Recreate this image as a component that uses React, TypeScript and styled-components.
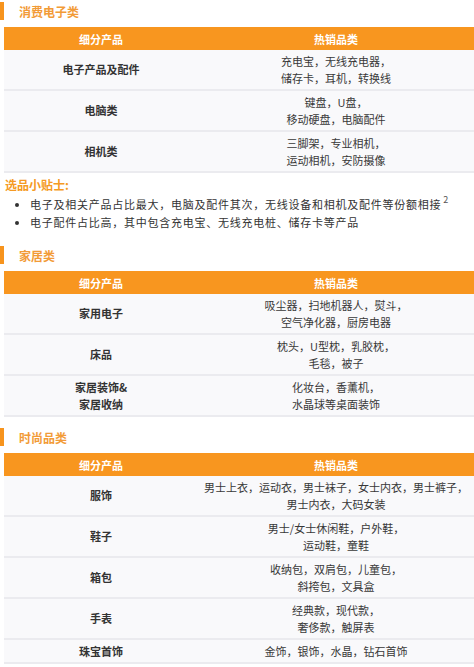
import styled, { createGlobalStyle } from "styled-components";

const GlobalStyle = createGlobalStyle`
  html, body {
    margin: 0;
    padding: 0;
    background: #fff;
  }
  body {
    font-family: "Noto Sans CJK SC", "Noto Sans", sans-serif;
    color: #333;
    overflow: hidden;
  }
`;

type Row = { name: string[]; items: string[] };
type Section = { title: string; rows: Row[] };

const sections: Section[] = [
  {
    title: "消费电子类",
    rows: [
      { name: ["电子产品及配件"], items: ["充电宝，无线充电器，", "储存卡，耳机，转换线"] },
      { name: ["电脑类"], items: ["键盘，U盘，", "移动硬盘，电脑配件"] },
      { name: ["相机类"], items: ["三脚架，专业相机，", "运动相机，安防摄像"] },
    ],
  },
  {
    title: "家居类",
    rows: [
      { name: ["家用电子"], items: ["吸尘器，扫地机器人，熨斗，", "空气净化器，厨房电器"] },
      { name: ["床品"], items: ["枕头，U型枕，乳胶枕，", "毛毯，被子"] },
      { name: ["家居装饰&", "家居收纳"], items: ["化妆台，香薰机，", "水晶球等桌面装饰"] },
    ],
  },
  {
    title: "时尚品类",
    rows: [
      {
        name: ["服饰"],
        items: ["男士上衣，运动衣，男士袜子，女士内衣，男士裤子，", "男士内衣，大码女装"],
      },
      { name: ["鞋子"], items: ["男士/女士休闲鞋，户外鞋，", "运动鞋，童鞋"] },
      { name: ["箱包"], items: ["收纳包，双肩包，儿童包，", "斜挎包，文具盒"] },
      { name: ["手表"], items: ["经典款，现代款，", "奢侈款，触屏表"] },
      { name: ["珠宝首饰"], items: ["金饰，银饰，水晶，钻石首饰"] },
    ],
  },
];

const tips = [
  { text: "电子及相关产品占比最大，电脑及配件其次，无线设备和相机及配件等份额相接", note: "2" },
  { text: "电子配件占比高，其中包含充电宝、无线充电桩、储存卡等产品" },
];

function Lines({ lines }: { lines: string[] }) {
  return (
    <>
      {lines.map((l, i) => (
        <span key={i}>
          {l}
          {i < lines.length - 1 && <br />}
        </span>
      ))}
    </>
  );
}

function CategoryTable({ section, first }: { section: Section; first?: boolean }) {
  return (
    <Block $first={first}>
      <SectionTitle>{section.title}</SectionTitle>
      <Table>
        <colgroup>
          <col style={{ width: 194 }} />
          <col />
        </colgroup>
        <thead>
          <tr>
            <HeadCell>细分产品</HeadCell>
            <HeadCell>热销品类</HeadCell>
          </tr>
        </thead>
        <tbody>
          {section.rows.map((row, i) => (
            <BodyRow key={i}>
              <NameCell>
                <Lines lines={row.name} />
              </NameCell>
              <ItemCell>
                <Lines lines={row.items} />
              </ItemCell>
            </BodyRow>
          ))}
        </tbody>
      </Table>
    </Block>
  );
}

export default function App() {
  return (
    <Page>
      <GlobalStyle />
      <CategoryTable section={sections[0]} first />
      <Tips>
        <TipsTitle>选品小贴士:</TipsTitle>
        <TipList>
          {tips.map((t, i) => (
            <li key={i}>
              {t.text}
              {t.note && <Note>{t.note}</Note>}
            </li>
          ))}
        </TipList>
      </Tips>
      <CategoryTable section={sections[1]} />
      <CategoryTable section={sections[2]} />
    </Page>
  );
}

const Page = styled.div`
  width: 474px;
  display: flex;
  flex-direction: column;
`;

const Block = styled.section<{ $first?: boolean }>`
  display: flex;
  flex-direction: column;
  margin-top: ${(p) => (p.$first ? "2px" : "11px")};
`;

const SectionTitle = styled.h3`
  margin: 0 0 7px;
  height: 18px;
  display: flex;
  align-items: center;
  gap: 15px;
  font-size: 12px;
  font-weight: 600;
  color: #f29b37;

  &::before {
    content: "";
    width: 4px;
    height: 18px;
    background: #f7941d;
  }
`;

const Table = styled.table`
  margin-left: 4px;
  width: 470px;
  border-collapse: collapse;
  table-layout: fixed;
`;

const HeadCell = styled.th`
  height: 23px;
  padding: 0;
  background: #f8961f;
  color: #fff;
  font-size: 11px;
  font-weight: 700;
  text-align: center;
`;

const BodyRow = styled.tr`
  background: #f9f9fb;
  border-bottom: 2px solid #ebebef;
`;

const NameCell = styled.td`
  padding: 2.5px 4px;
  text-align: center;
  vertical-align: middle;
  font-size: 11px;
  line-height: 17px;
  font-weight: 700;
  color: #333;
`;

const ItemCell = styled.td`
  padding: 2.5px 2px;
  text-align: center;
  vertical-align: middle;
  font-size: 11px;
  line-height: 17px;
  color: #383838;
  white-space: nowrap;
`;

const Tips = styled.div`
  display: flex;
  flex-direction: column;
  padding-top: 5px;
  padding-bottom: 4px;
`;

const TipsTitle = styled.div`
  padding-left: 5px;
  font-size: 12px;
  line-height: 14px;
  font-weight: 700;
  color: #f59a23;
`;

const TipList = styled.ul`
  margin: 3px 0 0;
  padding-left: 30px;
  font-size: 11px;
  line-height: 18px;
  letter-spacing: 0.75px;
  color: #333;

  li::marker {
    font-size: 10px;
  }
`;

const Note = styled.sup`
  font-size: 9px;
  letter-spacing: 0;
  margin-left: 2px;
  color: #555;
  vertical-align: 6px;
  line-height: 0;
`;
